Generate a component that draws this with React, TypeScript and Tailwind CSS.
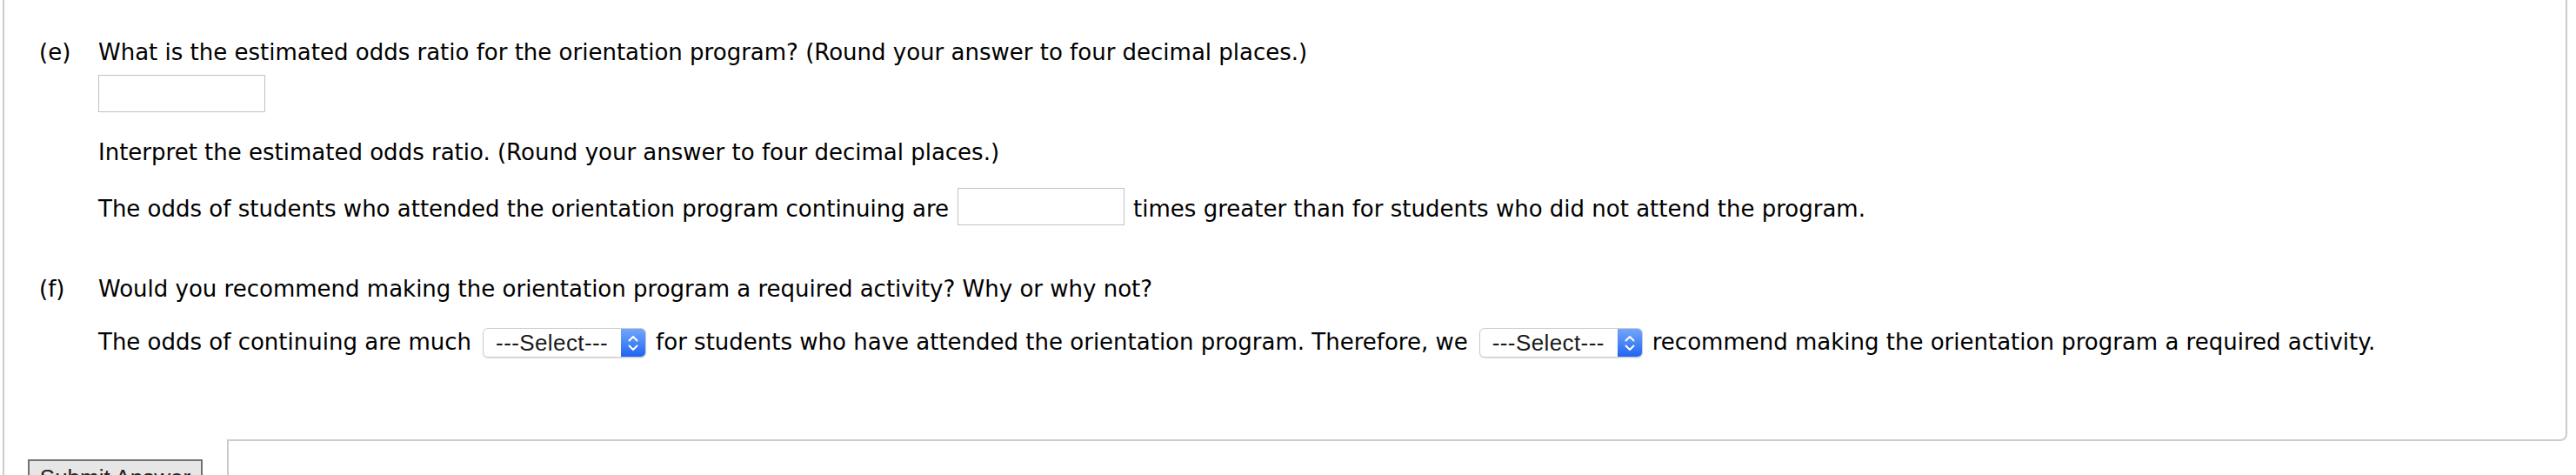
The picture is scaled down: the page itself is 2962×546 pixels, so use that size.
import React from 'react';

function AnswerBox() {
  return <input type="text" className="h-[43px] w-[192px] shrink-0 border border-[#c2c2c2] bg-white outline-none" />;
}

function MacSelect() {
  return (
    <div className="flex h-[34px] w-[188px] shrink-0 overflow-hidden rounded-[6px] border border-[#cdcdcd] bg-white shadow-[0_1px_1px_rgba(0,0,0,0.12)]">
      <span className="flex-1 pl-[14px] font-['Liberation_Sans',Arial,sans-serif] text-[26px] leading-[32px] tracking-[0.4px] text-[#1a1a1a]">
        ---Select---
      </span>
      <div className="flex w-[28px] flex-col items-center justify-center gap-[3px] bg-gradient-to-b from-[#72a6fa] to-[#1f63f2]">
        <svg width="12" height="8" viewBox="0 0 12 8" fill="none">
          <path d="M1.5 6.5 L6 2 L10.5 6.5" stroke="white" strokeWidth="2" strokeLinecap="round" strokeLinejoin="round" />
        </svg>
        <svg width="12" height="8" viewBox="0 0 12 8" fill="none">
          <path d="M1.5 1.5 L6 6 L10.5 1.5" stroke="white" strokeWidth="2" strokeLinecap="round" strokeLinejoin="round" />
        </svg>
      </div>
    </div>
  );
}

export default function App() {
  return (
    <div className="min-h-[546px] bg-white font-['Verdana','DejaVu_Sans',sans-serif] text-[26px] leading-[30px] text-black">
      <div className="ml-[3px] mr-[10px] border-l-2 border-[#cccccc]">
        {/* question parts */}
        <div className="border-r-2 border-[#cccccc] pb-[59px] pl-[40px] pt-[45px]">
          {/* part e */}
          <div className="flex">
            <div className="w-[68px] shrink-0">(e)</div>
            <div className="flex flex-col">
              <p>What is the estimated odds ratio for the orientation program? (Round your answer to four decimal places.)</p>
              <div className="mt-[11px]">
                <AnswerBox />
              </div>
              <p className="mt-[31px]">Interpret the estimated odds ratio. (Round your answer to four decimal places.)</p>
              <div className="mt-[26px] flex items-start gap-[10px] whitespace-nowrap">
                <span className="pt-[9px]">The odds of students who attended the orientation program continuing are</span>
                <AnswerBox />
                <span className="pt-[9px]">times greater than for students who did not attend the program.</span>
              </div>
            </div>
          </div>

          {/* part f */}
          <div className="mt-[58px] flex">
            <div className="w-[68px] shrink-0">(f)</div>
            <div className="flex flex-col">
              <p>Would you recommend making the orientation program a required activity? Why or why not?</p>
              <div className="mt-[30px] flex items-start whitespace-nowrap">
                <span className="pt-[1px]">The odds of continuing are much</span>
                <div className="ml-[13px] mr-[11px]">
                  <MacSelect />
                </div>
                <span className="pt-[1px]">for students who have attended the orientation program. Therefore, we</span>
                <div className="ml-[13px] mr-[11px]">
                  <MacSelect />
                </div>
                <span className="pt-[1px]">recommend making the orientation program a required activity.</span>
              </div>
            </div>
          </div>
        </div>

        <div className="flex">
          <div className="w-[256px] shrink-0 border-r-2 border-transparent" />
          <div className="h-[37px] flex-1 rounded-br-[8px] border-b-2 border-r-2 border-[#cccccc]" />
        </div>

        {/* actions */}
        <div className="flex">
          <div className="w-[256px] shrink-0 pl-[27px] pt-[21px]">
            <button
              type="button"
              className="h-[40px] w-[201px] border-2 border-[#727272] bg-[#e6e6e6] pt-[1px] font-['Liberation_Sans',Arial,sans-serif] text-[26px] leading-[30px] text-[#222]"
            >
              Submit Answer
            </button>
          </div>
          <div className="h-[60px] flex-1 border-l-2 border-[#cccccc]" />
        </div>
      </div>
    </div>
  );
}
